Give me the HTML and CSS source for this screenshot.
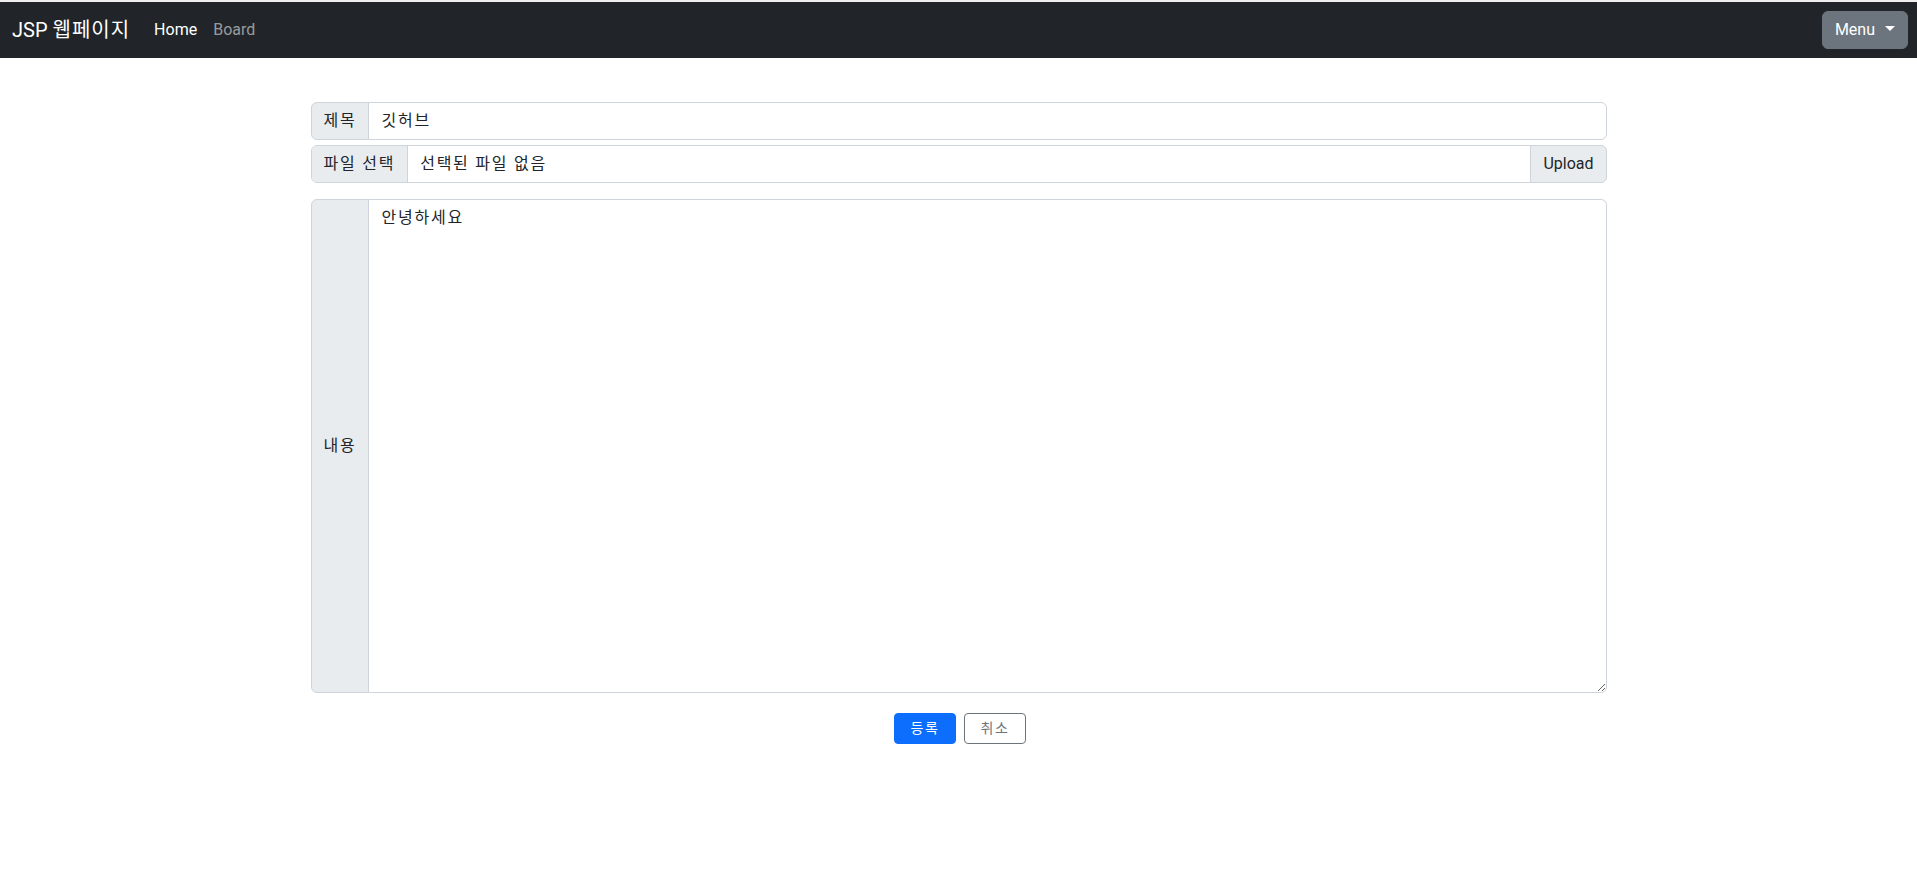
FILE: index.html
```html
<!DOCTYPE html>
<html lang="ko">
<head>
<meta charset="utf-8">
<title>JSP 웹페이지</title>
<link rel="stylesheet" href="styles.css">
</head>
<body>
<div class="topline"></div>
<nav class="navbar">
  <div class="navbar-inner">
    <div class="left">
      <a class="brand" href="#">JSP <span class="brand-ko">웹페이지</span></a>
      <div class="nav">
        <a class="nav-link active" href="#">Home</a>
        <a class="nav-link" href="#">Board</a>
      </div>
    </div>
    <button class="menu-btn" type="button">Menu<span class="caret"></span></button>
  </div>
</nav>
<main class="container">
  <div class="input-group row-title">
    <span class="group-text first ko">제목</span>
    <input class="form-control last ko" type="text" value="깃허브">
  </div>
  <div class="input-group row-file">
    <div class="file-control ko">
      <span class="file-btn">파일 선택</span>
      <span class="file-text">선택된 파일 없음</span>
    </div>
    <span class="group-text last upload">Upload</span>
  </div>
  <div class="input-group row-content">
    <span class="group-text first ko">내용</span>
    <textarea class="form-control last ko" rows="20">안녕하세요</textarea>
  </div>
  <div class="actions">
    <button class="btn btn-primary ko" type="button">등록</button>
    <button class="btn btn-outline ko" type="button">취소</button>
  </div>
</main>
</body>
</html>
```

FILE: styles.css
```css
* { box-sizing: border-box; }

body {
  margin: 0;
  font-family: "Segoe UI", Roboto, "Noto Sans CJK KR", sans-serif;
  font-size: 16px;
  line-height: 1.5;
  color: #212529;
  background: #fff;
}

a { text-decoration: none; }

.ko { letter-spacing: 0.11em; }
.brand-ko { letter-spacing: 0.05em; }

.topline {
  height: 2px;
  background: #eeeeee;
}

.navbar {
  background: #212529;
  padding: 8px 0;
}

.navbar-inner {
  display: flex;
  align-items: center;
  justify-content: space-between;
  padding: 0 9px 0 12px;
}

.left {
  display: flex;
  align-items: center;
}

.brand {
  color: #fff;
  font-size: 20px;
  line-height: 30px;
  padding: 5px 0;
  margin-right: 16px;
}

.nav { display: flex; }

.nav-link {
  padding: 8px;
  color: rgba(255, 255, 255, 0.55);
  line-height: 24px;
}

.nav-link.active { color: #fff; }

.menu-btn {
  background: #6c757d;
  border: 1px solid #6c757d;
  color: #fff;
  font-family: inherit;
  font-size: 16px;
  line-height: 24px;
  padding: 6px 12px;
  border-radius: 6px;
}

.caret {
  display: inline-block;
  margin-left: 10px;
  vertical-align: 4px;
  border-top: 5px solid #fff;
  border-left: 5px solid transparent;
  border-right: 5px solid transparent;
}

.container {
  width: 1296px;
  margin: 0 auto;
  padding-top: 44px;
}

.input-group {
  display: flex;
  align-items: stretch;
}

.row-title { margin-bottom: 5px; }
.row-file { margin-bottom: 16px; }

.group-text {
  display: flex;
  align-items: center;
  justify-content: center;
  padding: 6px 12px;
  background: #e9ecef;
  border: 1px solid #ced4da;
  color: #212529;
  white-space: nowrap;
}

.first { border-radius: 6px 0 0 6px; }
.last { border-radius: 0 6px 6px 0; margin-left: -1px; }

.form-control {
  flex: 1;
  min-width: 0;
  border: 1px solid #ced4da;
  padding: 6px 12px;
  font-family: inherit;
  font-size: 16px;
  line-height: 24px;
  color: #212529;
  background: #fff;
  outline: none;
}

textarea.form-control {
  resize: vertical;
  height: 494px;
}

.file-control {
  flex: 1;
  display: flex;
  align-items: stretch;
  border: 1px solid #ced4da;
  border-radius: 6px 0 0 6px;
  overflow: hidden;
  line-height: 24px;
}

.file-btn {
  background: #e9ecef;
  border-right: 1px solid #ced4da;
  padding: 6px 12px;
}

.file-text {
  padding: 6px 12px;
}

.actions {
  display: flex;
  justify-content: center;
  gap: 8px;
  margin-top: 20px;
  padding-left: 3px;
}

.btn {
  width: 62px;
  height: 31px;
  font-family: inherit;
  font-size: 14px;
  line-height: 21px;
  padding: 4px 8px;
  border-radius: 4px;
  border: 1px solid transparent;
}

.btn-primary {
  background: #0d6efd;
  border-color: #0d6efd;
  color: #fff;
}

.btn-outline {
  background: #fff;
  border-color: #6c757d;
  color: #6c757d;
}
```
